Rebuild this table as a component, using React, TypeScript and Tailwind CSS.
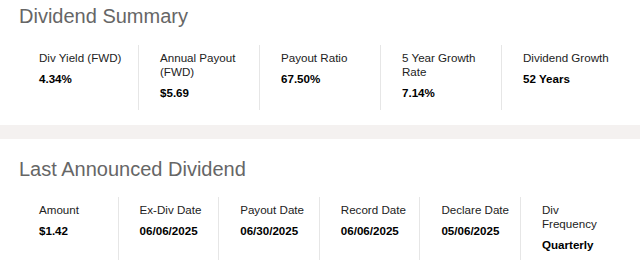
import React from "react";

type Item = { label: string; value: string };

const summary: Item[] = [
  { label: "Div Yield (FWD)", value: "4.34%" },
  { label: "Annual Payout (FWD)", value: "$5.69" },
  { label: "Payout Ratio", value: "67.50%" },
  { label: "5 Year Growth Rate", value: "7.14%" },
  { label: "Dividend Growth", value: "52 Years" },
];

const last: Item[] = [
  { label: "Amount", value: "$1.42" },
  { label: "Ex-Div Date", value: "06/06/2025" },
  { label: "Payout Date", value: "06/30/2025" },
  { label: "Record Date", value: "06/06/2025" },
  { label: "Declare Date", value: "05/06/2025" },
  { label: "Div Frequency", value: "Quarterly" },
];

function Col({ item, first, wide }: { item: Item; first: boolean; wide: boolean }) {
  return (
    <div
      className={
        (wide ? "w-[121px] pb-[10px] " : "w-[100.6px] pb-[8px] ") +
        "shrink-0 border-l pl-[21px] pr-[8px] pt-[6px] " +
        (first ? "border-transparent" : "border-[#e6e6e6]")
      }
    >
      <div className="text-[11.6px] leading-[14px] text-[#222]">{item.label}</div>
      <div className="mt-[7px] text-[11.6px] font-bold leading-[14px] text-black">{item.value}</div>
    </div>
  );
}

export default function App() {
  return (
    <div
      className="w-[640px] h-[267px] overflow-hidden bg-white"
      style={{ fontFamily: '"Liberation Sans", Arial, sans-serif' }}
    >
      <section className="pt-[4px] h-[125px]">
        <h2 className="pl-[19px] text-[20px] leading-[24px] text-[#666] font-normal">Dividend Summary</h2>
        <div className="mt-[17px] flex pl-[17px]">
          {summary.map((it, i) => (
            <Col key={it.label} item={it} first={i === 0} wide />
          ))}
        </div>
      </section>
      <div className="h-[14px] bg-[#f4f1f0]" />
      <section className="pt-[18px]">
        <h2 className="pl-[19px] text-[20px] leading-[24px] text-[#666] font-normal">Last Announced Dividend</h2>
        <div className="mt-[16px] flex pl-[17px]">
          {last.map((it, i) => (
            <Col key={it.label} item={it} first={i === 0} wide={false} />
          ))}
        </div>
      </section>
    </div>
  );
}
